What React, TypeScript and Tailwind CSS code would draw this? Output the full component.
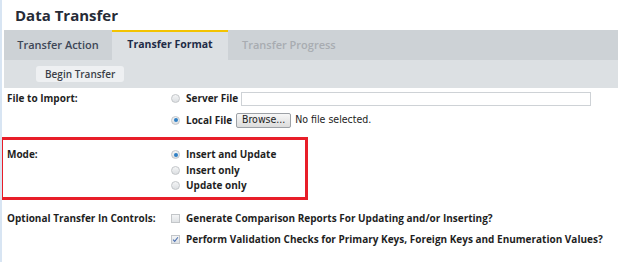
import React from 'react';

const Radio = ({ checked }: { checked?: boolean }) => (
  <span className="flex h-[9px] w-[9px] shrink-0 items-center justify-center rounded-full border border-[#c3c6c9] bg-gradient-to-b from-[#f4f5f6] to-[#dcdfe2]">
    {checked && <span className="h-[4px] w-[4px] rounded-full bg-[#2f7fc4]" />}
  </span>
);

const Check = ({ checked }: { checked?: boolean }) => (
  <span className="flex h-[9px] w-[9px] shrink-0 items-center justify-center border border-[#c3c6c9] bg-gradient-to-b from-[#f4f5f6] to-[#dfe2e5]">
    {checked && (
      <svg viewBox="0 0 8 8" className="h-[7px] w-[7px]">
        <path d="M1.2 4.2 L3.1 6.2 L6.8 1.4" fill="none" stroke="#4a6fb0" strokeWidth="1.2" />
      </svg>
    )}
  </span>
);

const Option = ({ children, h = 'h-[22px]' }: { children: React.ReactNode; h?: string }) => (
  <div className={`flex items-center gap-[6px] whitespace-nowrap ${h}`}>{children}</div>
);

export default function App() {
  return (
    <div className="h-[262px] w-[618px] overflow-hidden border-l-2 border-[#d8e5f3] bg-white font-['Open_Sans',sans-serif] text-[10px] font-bold text-[#1f1f1f]">
      <h1 className="h-[30px] pl-[13px] pt-[5px] text-[15px] font-bold leading-[20px] text-[#262b37]">Data Transfer</h1>

      <div className="ml-[2px]">
        <div className="flex h-[30px] bg-[#cdd2d6] text-[11px] font-semibold">
          <div className="flex w-[108px] items-center justify-center text-[#3e4757]">Transfer Action</div>
          <div className="flex w-[116px] items-center justify-center border-t-2 border-[#f3c300] bg-[#dce0e3] pb-[2px] text-[10.5px] font-bold text-[#1f2c47]">Transfer Format</div>
          <div className="flex items-center px-[14px] text-[#a8acb1]">Transfer Progress</div>
        </div>
        <div className="flex h-[28px] items-center bg-[#dce0e3] pl-[32px]">
          <button className="h-[16px] rounded-[3px] bg-[#eef0f2] px-[9px] text-[10px] font-semibold leading-[16px] text-[#3a3f48]">Begin Transfer</button>
        </div>
      </div>

      <div className="flex pl-[5px]">
        <div className="w-[164px] pt-[3px] leading-[15px]">File to Import:</div>
        <div>
          <Option h="h-[21px]">
            <Radio />
            <span>Server File</span>
            <input className="ml-[-3px] h-[14px] w-[350px] border border-[#ced2d6] bg-white" />
          </Option>
          <Option>
            <Radio checked />
            <span>Local File</span>
            <div className="ml-[-2px] flex items-center gap-[4px] font-['DejaVu_Sans_Condensed','DejaVu_Sans',sans-serif] text-[10.5px] font-normal">
              <span className="flex h-[15px] w-[55px] items-center justify-center rounded-[2px] border border-[#9da1a6] bg-gradient-to-b from-[#f7f7f7] to-[#dcdcdc] text-[#222]">Browse...</span>
              <span className="text-[#222]">No file selected.</span>
            </div>
          </Option>
        </div>
      </div>

      <div className="-ml-[2px] mt-[6px] flex h-[63px] w-[308px] border-[3px] border-[#e81e29] pl-[4px] pt-[7px]">
        <div className="w-[164px] leading-[15px]">Mode:</div>
        <div>
          <Option h="h-[15.5px]">
            <Radio checked />
            <span>Insert and Update</span>
          </Option>
          <Option h="h-[15.5px]">
            <Radio />
            <span>Insert only</span>
          </Option>
          <Option h="h-[15.5px]">
            <Radio />
            <span>Update only</span>
          </Option>
        </div>
      </div>

      <div className="mt-[8px] flex pl-[5px]">
        <div className="w-[164px] pt-[3px] leading-[15px]">Optional Transfer In Controls:</div>
        <div>
          <Option h="h-[21px]">
            <Check />
            <span>Generate Comparison Reports For Updating and/or Inserting?</span>
          </Option>
          <Option h="h-[21px]">
            <Check checked />
            <span>Perform Validation Checks for Primary Keys, Foreign Keys and Enumeration Values?</span>
          </Option>
        </div>
      </div>
    </div>
  );
}
